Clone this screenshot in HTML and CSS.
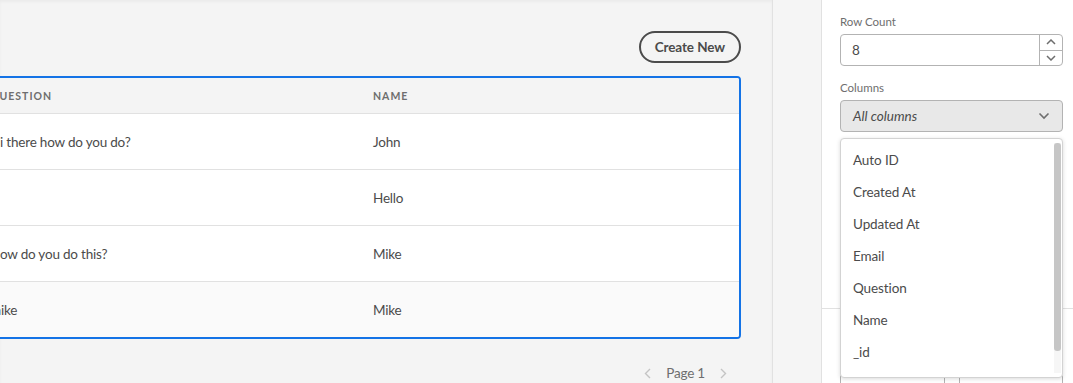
FILE: index.html
```html
<!DOCTYPE html>
<html lang="en">
<head>
    <meta charset="UTF-8">
    <title>Table Editor</title>
    <link rel="stylesheet" href="styles.css">
</head>
<body>
    <div class="main">
        <div class="content">
            <div class="toolbar">
                <button class="btn-outline">Create New</button>
            </div>

            <div class="table">
                <div class="row head">
                    <div class="cell">Question</div>
                    <div class="cell">Name</div>
                </div>
                <div class="row">
                    <div class="cell">Hi there how do you do?</div>
                    <div class="cell">John</div>
                </div>
                <div class="row">
                    <div class="cell"></div>
                    <div class="cell">Hello</div>
                </div>
                <div class="row">
                    <div class="cell">How do you do this?</div>
                    <div class="cell">Mike</div>
                </div>
                <div class="row hover">
                    <div class="cell">mike</div>
                    <div class="cell">Mike</div>
                </div>
            </div>

            <div class="pager">
                <svg width="7" height="11" viewBox="0 0 7 11"><path d="M6 1 L1.5 5.5 L6 10" fill="none" stroke="#c4c4c4" stroke-width="1.4"/></svg>
                <span>Page 1</span>
                <svg width="7" height="11" viewBox="0 0 7 11"><path d="M1 1 L5.5 5.5 L1 10" fill="none" stroke="#c4c4c4" stroke-width="1.4"/></svg>
            </div>
        </div>
    </div>

    <div class="rail"></div>

    <div class="panel">
        <label class="field-label">Row Count</label>
        <div class="number-input">
            <span class="value">8</span>
            <div class="stepper">
                <span class="step">
                    <svg width="10" height="6" viewBox="0 0 10 6"><path d="M1 5 L5 1 L9 5" fill="none" stroke="#6e6e6e" stroke-width="1.5"/></svg>
                </span>
                <span class="step">
                    <svg width="10" height="6" viewBox="0 0 10 6"><path d="M1 1 L5 5 L9 1" fill="none" stroke="#6e6e6e" stroke-width="1.5"/></svg>
                </span>
            </div>
        </div>

        <label class="field-label">Columns</label>
        <div class="picker open">
            <span>All columns</span>
            <svg width="12" height="8" viewBox="0 0 12 8"><path d="M1.5 1.5 L6 6 L10.5 1.5" fill="none" stroke="#6e6e6e" stroke-width="1.6"/></svg>
        </div>

        <div class="section">
            <div class="pair">
                <div class="box"></div>
                <div class="box"></div>
            </div>
        </div>

        <!-- popover for the columns picker -->
        <div class="popover">
            <ul class="menu">
                <li>Auto ID</li>
                <li>Created At</li>
                <li>Updated At</li>
                <li>Email</li>
                <li>Question</li>
                <li>Name</li>
                <li>_id</li>
            </ul>
            <div class="scroll-track"><div class="scroll-thumb"></div></div>
        </div>
    </div>
</body>
</html>
```

FILE: styles.css
```css
body {
    margin: 0;
    height: 383px;
    display: flex;
    overflow: hidden;
    font-family: Lato, "Liberation Sans", sans-serif;
    color: #4b4b4b;
    background: #ffffff;
}
.main {
    width: 772px;
    flex: none;
    background-color: #f4f4f4;
    border-right: 1px solid #e1e1e1;
    box-shadow: inset 0 2px 3px rgba(0,0,0,0.04);
    overflow: hidden;
}
.content {
    margin-left: -28px;
    padding-right: 31px;
}
.toolbar {
    display: flex;
    justify-content: flex-end;
    padding-top: 31px;
    height: 32px;
}
.btn-outline {
    height: 32px;
    padding: 0 14px;
    border: 2px solid #4b4b4b;
    border-radius: 16px;
    background: transparent;
    color: #4b4b4b;
    font-family: inherit;
    font-size: 13.5px;
    font-weight: bold;
    letter-spacing: -0.1px;
}
.table {
    margin-top: 13px;
    border: 2px solid #1473e6;
    border-radius: 4px;
    background: #ffffff;
    overflow: hidden;
}
.row {
    display: grid;
    grid-template-columns: 383px 1fr;
    height: 55px;
    border-bottom: 1px solid #e1e1e1;
    align-items: center;
    font-size: 13.5px;
    letter-spacing: -0.2px;
}
.row:last-child {
    border-bottom: none;
}
.row.head {
    height: 35px;
    background-color: #f4f4f4;
    font-size: 10.5px;
    font-weight: bold;
    letter-spacing: 1px;
    text-transform: uppercase;
    color: #6e6e6e;
}
.row.hover {
    background-color: #fafafa;
}
.cell {
    padding-left: 16px;
    white-space: nowrap;
}
.pager {
    display: flex;
    justify-content: flex-end;
    align-items: center;
    gap: 15px;
    margin-top: 24px;
    padding-right: 14px;
    height: 20px;
    font-size: 13.5px;
    letter-spacing: -0.2px;
    color: #6e6e6e;
}
.rail {
    width: 48px;
    flex: none;
    background-color: #f5f5f5;
    border-right: 1px solid #e1e1e1;
}
.panel {
    flex: 1;
    position: relative;
    padding: 13px 10px 0 18px;
}
.field-label {
    display: block;
    font-size: 11.5px;
    line-height: 18px;
    color: #6e6e6e;
    margin-bottom: 3px;
}
.number-input {
    display: flex;
    height: 30px;
    border: 1px solid #b3b3b3;
    border-radius: 4px;
    margin-bottom: 13px;
}
.number-input .value {
    flex: 1;
    padding-left: 11px;
    font-size: 13.5px;
    line-height: 30px;
}
.stepper {
    width: 22px;
    display: flex;
    flex-direction: column;
    border-left: 1px solid #b3b3b3;
}
.step {
    flex: 1;
    display: flex;
    align-items: center;
    justify-content: center;
}
.step + .step {
    border-top: 1px solid #b3b3b3;
}
.picker {
    display: flex;
    justify-content: space-between;
    align-items: center;
    height: 30px;
    padding: 0 12px;
    border: 1px solid #b3b3b3;
    border-radius: 4px;
    font-size: 13.5px;
    font-style: italic;
}
.picker.open {
    background-color: #e8e8e8;
}
.section {
    margin: 176px -10px 0 -18px;
    border-top: 1px solid #e1e1e1;
    padding: 64px 10px 0 18px;
}
.pair {
    display: flex;
    gap: 14px;
}
.box {
    flex: 1;
    height: 30px;
    border: 1px solid #b3b3b3;
    border-radius: 4px;
}
.popover {
    position: absolute;
    top: 138px;
    left: 18px;
    right: 10px;
    height: 238px;
    background: #ffffff;
    border: 1px solid #d3d3d3;
    border-radius: 4px;
    box-shadow: 0 1px 4px rgba(0,0,0,0.15);
    display: flex;
}
.menu {
    flex: 1;
    list-style: none;
    margin: 0;
    padding: 5px 0 0 0;
}
.menu li {
    height: 32px;
    line-height: 32px;
    padding-left: 12px;
    font-size: 13.5px;
    letter-spacing: -0.1px;
}
.scroll-track {
    width: 7px;
    margin: 4px 1px 4px 0;
    background-color: #f6f6f6;
}
.scroll-thumb {
    height: 208px;
    background-color: #c6c6c6;
    border-radius: 3px;
}
```
